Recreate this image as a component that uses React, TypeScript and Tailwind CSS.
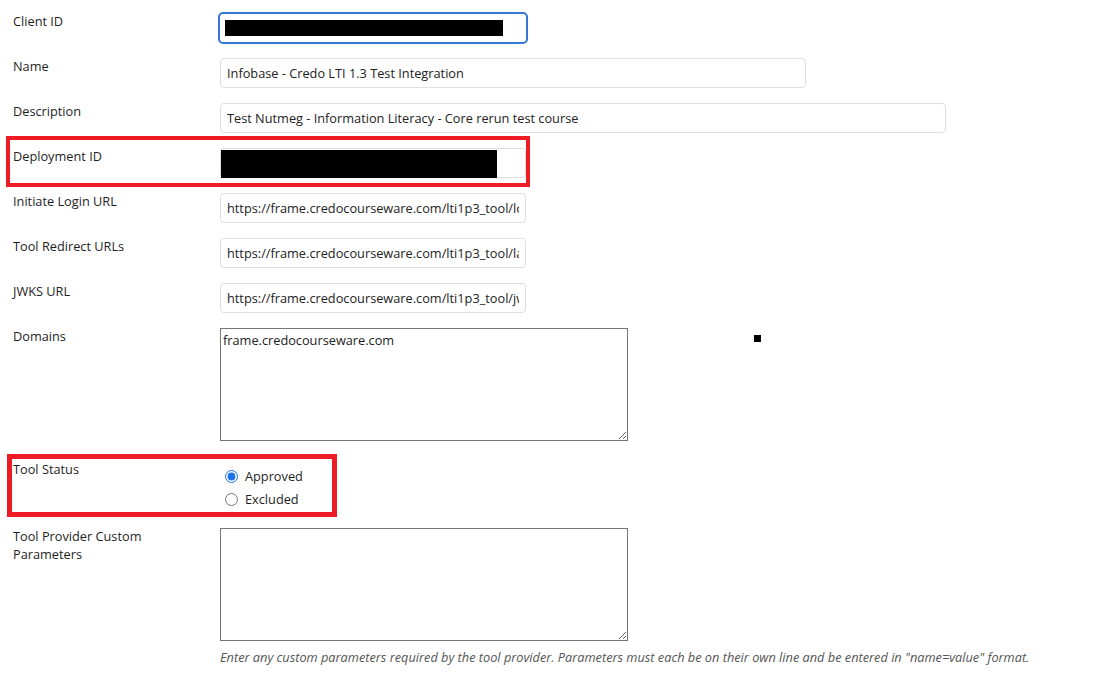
import React from "react";

const inputCls =
  "h-[30px] border border-[#dedede] rounded-[4px] px-[6px] text-[12.75px] text-[#222] bg-white outline-none font-['Open_Sans',sans-serif]";

function Row({
  label,
  children,
  className = "",
}: {
  label: React.ReactNode;
  children: React.ReactNode;
  className?: string;
}) {
  return (
    <div className={"relative flex " + className}>
      <div className="w-[207px] shrink-0 leading-[18px] text-[#1e1e1e]">{label}</div>
      <div>{children}</div>
    </div>
  );
}

export default function App() {
  return (
    <div className="w-[1097px] h-[691px] bg-white font-['Open_Sans',sans-serif] text-[12.75px] pl-[13px] pt-[12px] overflow-hidden">
      <div className="flex flex-col">
        <Row label="Client ID">
          <div className="-ml-[2px] w-[310px] h-[32px] border-2 border-[#3478d4] rounded-[5px] flex items-center pl-[5px]">
            <div className="w-[278px] h-[16px] bg-black" />
          </div>
        </Row>

        <Row label={<div className="-mt-px">Name</div>} className="mt-[14px]">
          <input readOnly className={inputCls + " w-[586px]"} value="Infobase - Credo LTI 1.3 Test Integration" />
        </Row>

        <Row label={<div className="-mt-px">Description</div>} className="mt-[15px]">
          <input
            readOnly
            className={inputCls + " w-[726px]"}
            value="Test Nutmeg - Information Literacy - Core rerun test course"
          />
        </Row>

        <Row label={<div className="-mt-px">Deployment ID</div>} className="mt-[15px]">
          <div className="w-[306px] h-[30px] border border-[#dedede] rounded-[4px] bg-white relative">
            <div className="absolute left-0 top-px w-[276px] h-[28px] bg-black" />
          </div>
          <div className="absolute -left-[7px] -top-[12px] w-[524px] h-[51px] border-[4px] border-[#ed1c24] pointer-events-none" />
        </Row>

        <Row label={<div className="-mt-px">Initiate Login URL</div>} className="mt-[15px]">
          <input
            readOnly
            className={inputCls + " w-[306px]"}
            value="https://frame.credocourseware.com/lti1p3_tool/login"
          />
        </Row>

        <Row label={<div className="-mt-px">Tool Redirect URLs</div>} className="mt-[15px]">
          <input
            readOnly
            className={inputCls + " w-[306px]"}
            value="https://frame.credocourseware.com/lti1p3_tool/launch"
          />
        </Row>

        <Row label={<div className="-mt-px">JWKS URL</div>} className="mt-[15px]">
          <input
            readOnly
            className={inputCls + " w-[306px]"}
            value="https://frame.credocourseware.com/lti1p3_tool/jwks"
          />
        </Row>

        <Row label={<div className="-mt-px">Domains</div>} className="mt-[15px]">
          <textarea
            readOnly
            className="block w-[408px] h-[113px] border border-[#767676] px-[2px] py-[2px] text-[12.75px] leading-[18px] text-[#222] outline-none font-['Open_Sans',sans-serif]"
            value="frame.credocourseware.com"
          />
          <div className="absolute left-[741px] top-[7px] w-[7px] h-[7px] bg-black" />
        </Row>

        <Row label="Tool Status" className="mt-[19px]">
          <div className="pt-[5px] pl-[5px] flex flex-col">
            <label className="h-[23px] flex items-center gap-[7px] text-[#1e1e1e]">
              <input type="radio" name="status" defaultChecked className="m-0 w-[13px] h-[13px] accent-[#1a73e8]" />
              <span>Approved</span>
            </label>
            <label className="h-[23px] flex items-center gap-[7px] text-[#1e1e1e]">
              <input type="radio" name="status" className="m-0 w-[13px] h-[13px]" />
              <span>Excluded</span>
            </label>
          </div>
          <div className="absolute -left-[6px] -top-[6px] w-[330px] h-[63px] border-[5px] border-[#ed1c24] pointer-events-none" />
        </Row>

        <Row
          label={
            <div className="-mt-px">
              Tool Provider Custom
              <br />
              Parameters
            </div>
          }
          className="mt-[17px]"
        >
          <textarea
            readOnly
            className="block w-[408px] h-[113px] border border-[#767676] px-[2px] py-[2px] text-[12.75px] outline-none font-['Open_Sans',sans-serif]"
            value=""
          />
          <div className="mt-[7px] italic text-[12.75px] leading-[18px] text-[#555] whitespace-nowrap">
            Enter any custom parameters required by the tool provider. Parameters must each be on their own line and be
            entered in "name=value" format.
          </div>
        </Row>
      </div>
    </div>
  );
}
